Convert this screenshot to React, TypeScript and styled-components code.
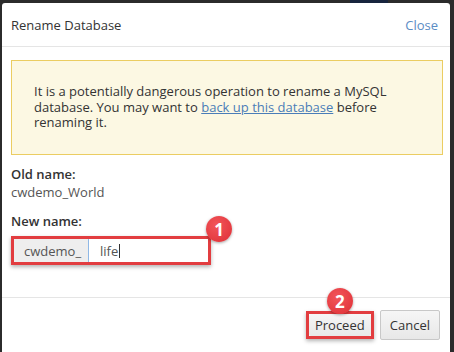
import React from "react";
import styled, { createGlobalStyle } from "styled-components";

const GlobalStyle = createGlobalStyle`
  html, body {
    margin: 0;
    padding: 0;
    background: #2b2b2b;
    font-family: "Open Sans", "Liberation Sans", Arial, sans-serif;
    font-size: 13px;
    color: #333;
  }
  #root {
    position: relative;
    height: 352px;
    overflow: hidden;
  }
`;

const Backdrop = styled.div`
  position: relative;
  height: 352px;
  padding: 3px 4px 0 2px;
  box-sizing: border-box;
`;

const PageTab = styled.div`
  position: absolute;
  top: 0;
  left: 350px;
  width: 38px;
  height: 3px;
  background: #17243d;
`;

const Modal = styled.div`
  position: relative;
  background: #fff;
  border-radius: 3px 3px 0 0;
  height: 100%;
  display: flex;
  flex-direction: column;
`;

const Header = styled.div`
  display: flex;
  align-items: center;
  justify-content: space-between;
  height: 43px;
  padding: 0 12px 0 9px;
  border-bottom: 1px solid #e5e5e5;
`;

const Title = styled.h4`
  margin: 0;
  font-size: 13px;
  font-weight: 400;
  color: #333;
`;

const Link = styled.a`
  color: #5b8cc4;
  text-decoration: ${(p: { $underline?: boolean }) => (p.$underline ? "underline" : "none")};
  cursor: pointer;
`;

const Body = styled.div`
  padding: 13px 7px 32px 9px;
`;

const Alert = styled.div`
  background: #fcf8e3;
  border: 1px solid #ebcd62;
  padding: 23px 22px;
  line-height: 15.7px;
  color: #333;
  margin-bottom: 10px;
`;

const Label = styled.div`
  font-weight: 600;
  line-height: 18px;
  color: #333;
  margin-top: ${(p: { $top?: number }) => p.$top ?? 0}px;
`;

const Value = styled.div`
  line-height: 18px;
  color: #555;
`;

const Highlight = styled.div<{ $w?: number }>`
  position: relative;
  display: inline-flex;
  border: 3px solid #e23d40;
  box-shadow: 0 2px 4px rgba(0, 0, 0, 0.3);
  ${(p) => (p.$w ? `width: ${p.$w}px;` : "")}
  box-sizing: border-box;
`;

const InputGroup = styled.div`
  display: flex;
  width: 100%;
  height: 23px;
`;

const Addon = styled.span`
  display: flex;
  align-items: center;
  padding: 0 10px 0 10px;
  width: 74px;
  box-sizing: border-box;
  background: #eee;
  color: #555;
`;

const Field = styled.div`
  flex: 1;
  display: flex;
  align-items: center;
  padding-left: 11px;
  border-left: 1px solid #8fb8e6;
  color: #555;
`;

const Caret = styled.span`
  display: inline-block;
  width: 1px;
  height: 14px;
  background: #333;
  margin-left: 1px;
`;

const Badge = styled.span<{ $top: number; $left: number }>`
  position: absolute;
  top: ${(p) => p.$top}px;
  left: ${(p) => p.$left}px;
  width: 26px;
  height: 26px;
  border-radius: 50%;
  background: radial-gradient(circle at 40% 35%, #f2555a, #de2f35);
  box-shadow: 0 1px 3px rgba(0, 0, 0, 0.35);
  color: #fff;
  font-weight: 700;
  font-size: 17px;
  display: flex;
  align-items: center;
  justify-content: center;
  z-index: 2;
`;

const Footer = styled.div`
  display: flex;
  justify-content: flex-end;
  align-items: center;
  gap: 6px;
  padding: 12px 10px 0;
  border-top: 1px solid #e5e5e5;
`;

const Button = styled.button<{ $framed?: boolean }>`
  font-family: inherit;
  font-size: 13px;
  color: #333;
  background: linear-gradient(#f6f6f6, #e8e8e8);
  border: ${(p) => (p.$framed ? "none" : "1px solid #c8c8c8")};
  border-radius: 2px;
  height: ${(p) => (p.$framed ? 22 : 30)}px;
  padding: ${(p) => (p.$framed ? "0 5px" : "0 9px")};
  width: ${(p) => (p.$framed ? "62px" : "auto")};
  cursor: pointer;
`;

export default function App() {
  return (
    <>
      <GlobalStyle />
      <Backdrop>
        <PageTab />
        <Modal>
          <Header>
            <Title>Rename Database</Title>
            <Link>Close</Link>
          </Header>
          <Body>
            <Alert>
              It is a potentially dangerous operation to rename a MySQL database. You may want to{" "}
              <Link $underline style={{ color: "#4a7db8" }}>back up this database</Link> before renaming it.
            </Alert>
            <Label>Old name:</Label>
            <Value>cwdemo_World</Value>
            <Label $top={11}>New name:</Label>
            <div style={{ marginTop: 6, marginLeft: 0 }}>
              <Highlight $w={200}>
                <InputGroup>
                  <Addon>cwdemo_</Addon>
                  <Field>
                    life
                    <Caret />
                  </Field>
                </InputGroup>
                <Badge $top={-23} $left={192}>1</Badge>
              </Highlight>
            </div>
          </Body>
          <Footer>
            <Highlight>
              <Button $framed>Proceed</Button>
              <Badge $top={-26} $left={18}>2</Badge>
            </Highlight>
            <Button>Cancel</Button>
          </Footer>
        </Modal>
      </Backdrop>
    </>
  );
}
